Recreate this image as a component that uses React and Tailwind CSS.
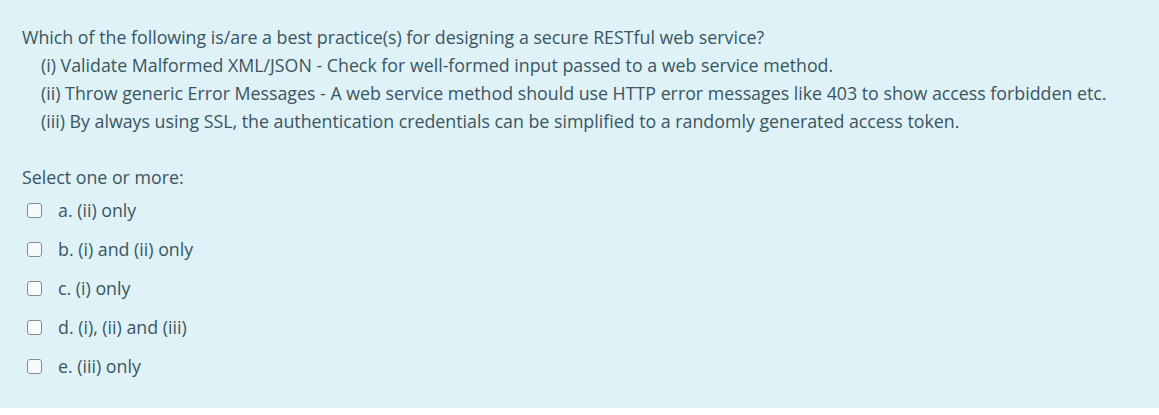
import React from 'react';

const lines = [
  '(i) Validate Malformed XML/JSON - Check for well-formed input passed to a web service method.',
  '(ii) Throw generic Error Messages - A web service method should use HTTP error messages like 403 to show access forbidden etc.',
  '(iii) By always using SSL, the authentication credentials can be simplified to a randomly generated access token.',
];

const options = ['a. (ii) only', 'b. (i) and (ii) only', 'c. (i) only', 'd. (i), (ii) and (iii)', 'e. (iii) only'];

export default function App() {
  return (
    <div className="min-h-screen bg-white" style={{ fontFamily: '"Open Sans", "Noto Sans", sans-serif' }}>
      <div className="h-[408px] bg-[#def2f8] pl-[22px] pt-[23px] text-[17.8px] text-[#3a5560]">
        {/* Question */}
        <p className="leading-[28px]">Which of the following is/are a best practice(s) for designing a secure RESTful web service?</p>
        {lines.map(l => (
          <p key={l} className="leading-[28px] pl-[19px]">{l}</p>
        ))}

        {/* Answers */}
        <p className="mt-[28px] leading-[28px]">Select one or more:</p>
        <div>
          {options.map(o => (
            <label key={o} className="flex items-center h-[39px]">
              <span className="ml-[5px] w-[15px] h-[15px] rounded-[3px] border border-[#858d91] bg-[#f8fbfc] flex-shrink-0" />
              <span className="ml-[16px]">{o}</span>
            </label>
          ))}
        </div>
      </div>
    </div>
  );
}
